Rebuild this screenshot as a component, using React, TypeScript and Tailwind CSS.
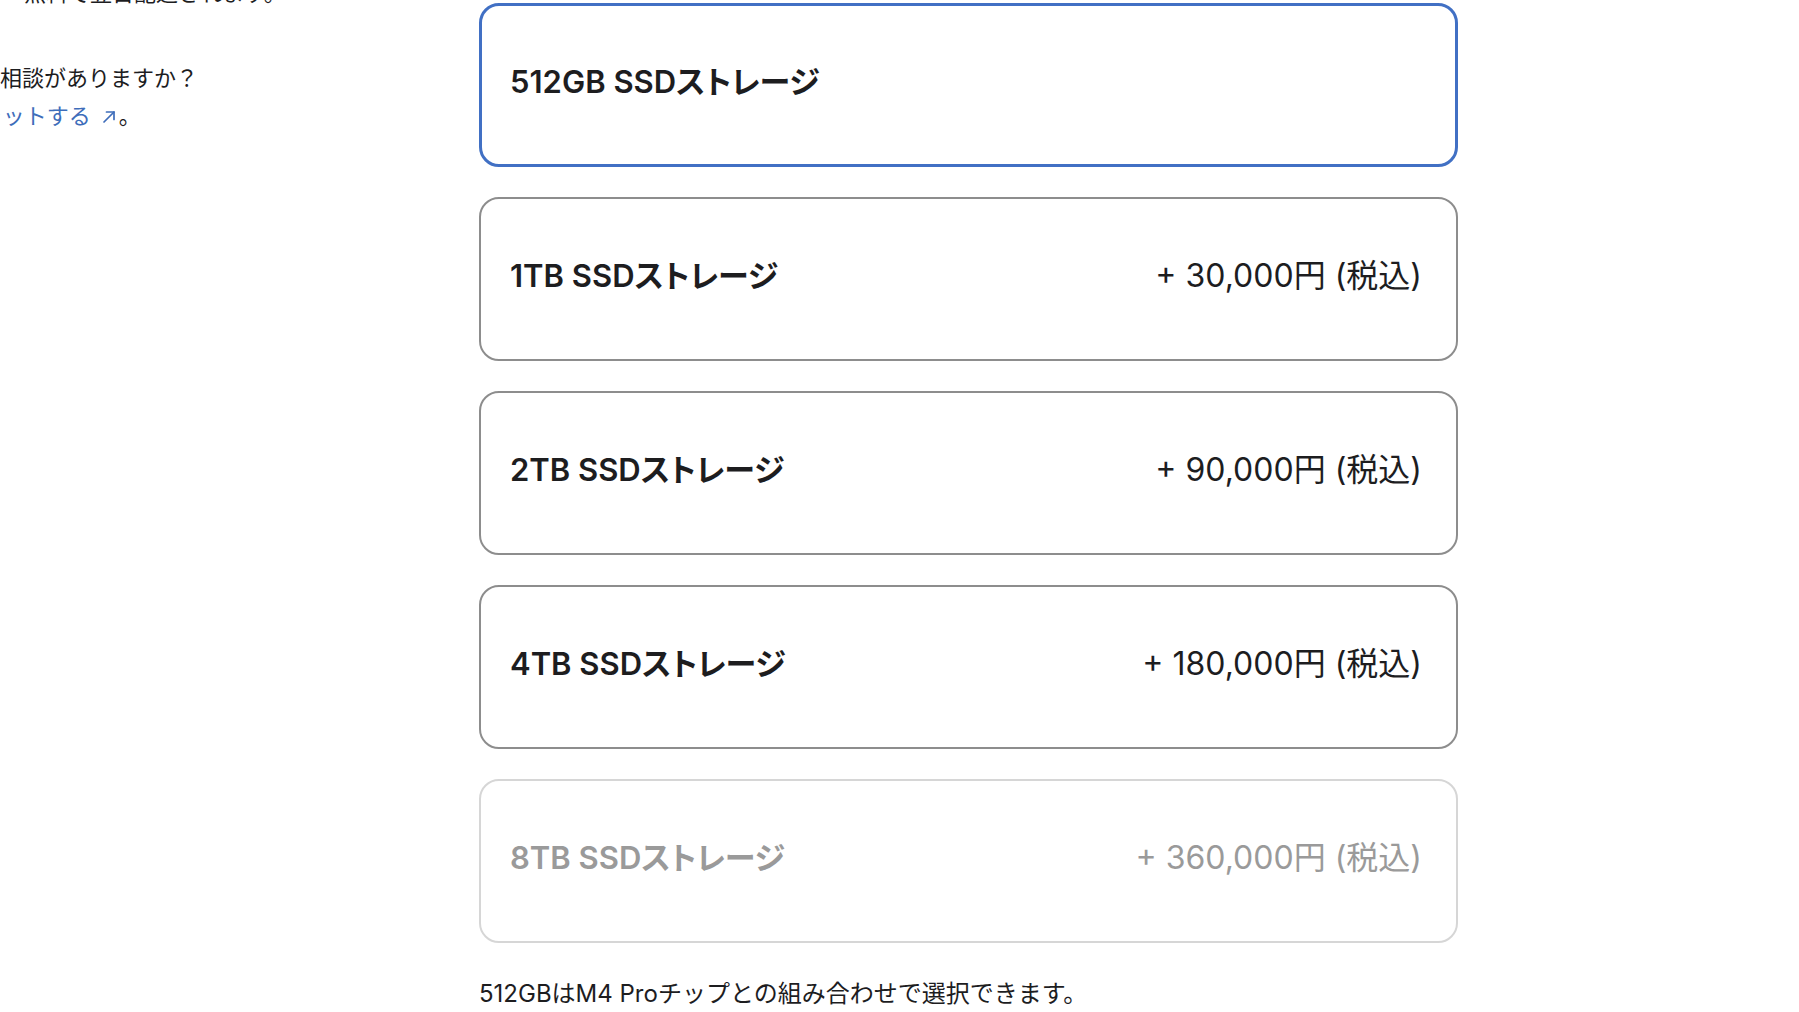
import React from "react";

type Option = {
  label: string;
  price?: string;
  selected?: boolean;
  disabled?: boolean;
};

const options: Option[] = [
  { label: "512GB SSDストレージ", selected: true },
  { label: "1TB SSDストレージ", price: "+ 30,000円" },
  { label: "2TB SSDストレージ", price: "+ 90,000円" },
  { label: "4TB SSDストレージ", price: "+ 180,000円" },
  { label: "8TB SSDストレージ", price: "+ 360,000円", disabled: true },
];

function StorageCard({ option }: { option: Option }) {
  const { label, price, selected, disabled } = option;
  return (
    <button
      type="button"
      disabled={disabled}
      className={
        selected
          ? "flex h-[164px] w-full items-center justify-between rounded-[20px] border-[3px] border-[#4170c4] pb-[7px] pl-[28px] pr-[33px] text-left"
          : disabled
            ? "flex h-[164px] w-full items-center justify-between rounded-[20px] border-2 border-[#d6d6d6] pb-[7px] pl-[29px] pr-[34px] text-left text-[#9a9a9a]"
            : "flex h-[164px] w-full items-center justify-between rounded-[20px] border-2 border-[#8d8d8d] pb-[7px] pl-[29px] pr-[34px] text-left"
      }
    >
      <span className="text-[31px] font-semibold leading-none">{label}</span>
      {price && (
        <span className="text-[32px] leading-none">
          {price}
          <span className="ml-[9px]">(税込)</span>
        </span>
      )}
    </button>
  );
}

export default function App() {
  return (
    <div className="h-[1012px] w-full overflow-hidden bg-white text-[#1d1d1f] [font-family:Inter,'Noto_Sans_CJK_JP',sans-serif]">
      <div className="flex">
        {/* sidebar, partly off the left edge */}
        <aside className="-ml-[110px] w-[589px] shrink-0 text-[22px] leading-[38px]">
          <p className="-mt-[26px] whitespace-nowrap pl-[134px]">無料で翌日配送されます。</p>
          <div className="mt-[47px]">
            <p className="whitespace-nowrap">ご購入のご相談がありますか？</p>
            <p className="whitespace-nowrap pl-[3px]">
              <a href="#chat" className="text-[#3e6dba]">
                今すぐチャットする
                <svg
                  viewBox="0 0 16 16"
                  className="ml-[10px] inline-block h-[16px] w-[16px] align-[-1px]"
                  fill="none"
                  stroke="currentColor"
                  strokeWidth="1.7"
                  strokeLinecap="round"
                  strokeLinejoin="round"
                >
                  <path d="M3 13 L13 3" />
                  <path d="M5.5 3 H13 V10.5" />
                </svg>
              </a>
              <span className="ml-[2px]">。</span>
            </p>
          </div>
        </aside>

        <main className="w-[979px] shrink-0 pt-[3px] [font-feature-settings:'palt']">
          <div className="flex flex-col gap-[30px]">
            {options.map((o) => (
              <StorageCard key={o.label} option={o} />
            ))}
          </div>
          <p className="mt-[35px] text-[24px] leading-[32px] [font-feature-settings:normal]">
            512GBはM4 Proチップとの組み合わせで選択できます。
          </p>
        </main>
      </div>
    </div>
  );
}
